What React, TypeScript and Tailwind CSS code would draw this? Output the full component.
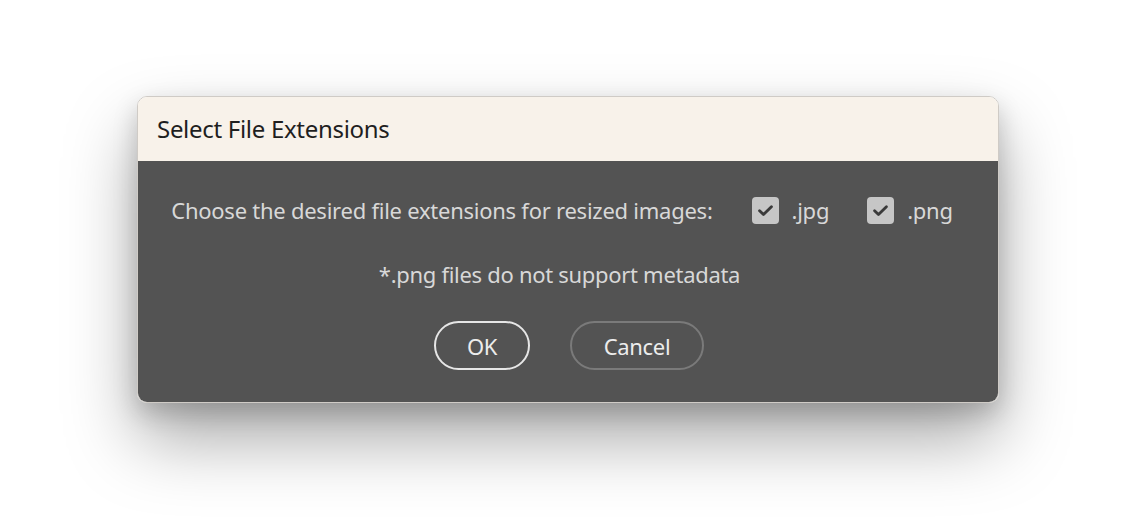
export default function App() {
  return (
    <div className="w-[1140px] h-[532px] bg-white pt-[96px] pl-[137px]" style={{ fontFamily: '"Noto Sans", "Open Sans", sans-serif' }}>
      <div className="w-[862px] rounded-[10px] border border-[#cfcbc6] overflow-hidden shadow-[0_36px_70px_rgba(0,0,0,0.34),0_10px_24px_rgba(0,0,0,0.18)]">
        {/* Header */}
        <div className="h-[64px] bg-[#f8f2ea] flex items-center pl-[19px]">
          <span className="text-[24px] text-[#1f1f1f] tracking-[-0.3px]">Select File Extensions</span>
        </div>

        {/* Body */}
        <div className="bg-[#535353] h-[241px] flex flex-col items-center pt-[35px]">
          <div className="flex items-center h-[28px] text-[22px] text-[#d8d8d8] tracking-[-0.25px] ml-[-12px]">
            <span>Choose the desired file extensions for resized images:</span>
            <label className="flex items-center ml-[39px]">
              <span className="w-[27px] h-[27px] rounded-[4px] bg-[#c6c6c6] flex items-center justify-center">
                <svg width="19" height="19" viewBox="0 0 16 16" fill="none">
                  <path d="M3 8.2l3.3 3.2L13 4.8" stroke="#3a3a3a" strokeWidth="2.4" strokeLinecap="round" strokeLinejoin="round" />
                </svg>
              </span>
              <span className="ml-[13px]">.jpg</span>
            </label>
            <label className="flex items-center ml-[38px]">
              <span className="w-[27px] h-[27px] rounded-[4px] bg-[#c6c6c6] flex items-center justify-center">
                <svg width="19" height="19" viewBox="0 0 16 16" fill="none">
                  <path d="M3 8.2l3.3 3.2L13 4.8" stroke="#3a3a3a" strokeWidth="2.4" strokeLinecap="round" strokeLinejoin="round" />
                </svg>
              </span>
              <span className="ml-[13px]">.png</span>
            </label>
          </div>

          <p className="mt-[36px] leading-[28px] text-[22px] text-[#d8d8d8] tracking-[-0.3px] ml-[-17px]">*.png files do not support metadata</p>

          <div className="flex gap-[40px] mt-[33px] ml-[2px]">
            <button className="w-[96px] h-[49px] rounded-full border-2 border-[#e6e6e6] text-[22px] leading-none text-[#ececec] tracking-[-0.3px]">OK</button>
            <button className="w-[134px] h-[49px] rounded-full border-2 border-[#7a7a7a] text-[22px] leading-none text-[#ececec] tracking-[-0.3px]">Cancel</button>
          </div>
        </div>
      </div>
    </div>
  );
}
